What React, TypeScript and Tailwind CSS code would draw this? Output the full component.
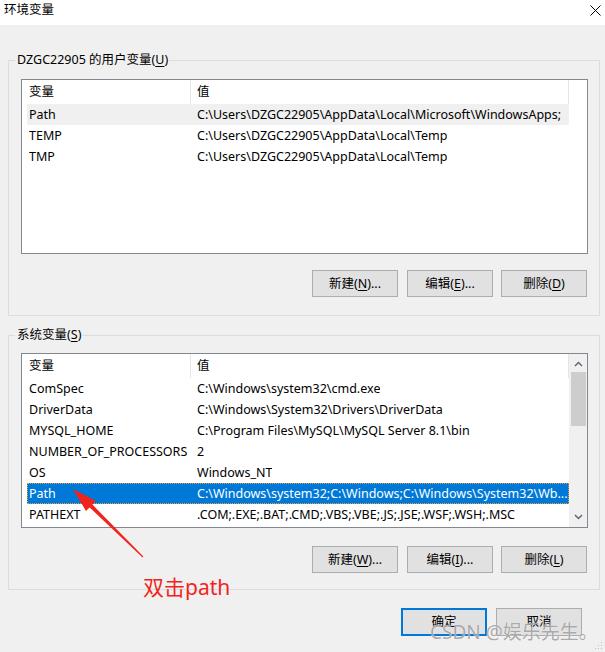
import React from 'react'

const font = { fontFamily: '"Noto Sans", "Noto Sans CJK SC", sans-serif' }

const userVars = [
  { name: 'Path', value: 'C:\\Users\\DZGC22905\\AppData\\Local\\Microsoft\\WindowsApps;', hover: true },
  { name: 'TEMP', value: 'C:\\Users\\DZGC22905\\AppData\\Local\\Temp' },
  { name: 'TMP', value: 'C:\\Users\\DZGC22905\\AppData\\Local\\Temp' },
]

const sysVars = [
  { name: 'ComSpec', value: 'C:\\Windows\\system32\\cmd.exe' },
  { name: 'DriverData', value: 'C:\\Windows\\System32\\Drivers\\DriverData' },
  { name: 'MYSQL_HOME', value: 'C:\\Program Files\\MySQL\\MySQL Server 8.1\\bin' },
  { name: 'NUMBER_OF_PROCESSORS', value: '2' },
  { name: 'OS', value: 'Windows_NT' },
  { name: 'Path', value: 'C:\\Windows\\system32;C:\\Windows;C:\\Windows\\System32\\Wb...', selected: true },
  { name: 'PATHEXT', value: '.COM;.EXE;.BAT;.CMD;.VBS;.VBE;.JS;.JSE;.WSF;.WSH;.MSC' },
]

type Row = { name: string; value: string; hover?: boolean; selected?: boolean }

function WinButton({ label, mnemonic, suffix, className = '' }: { label: string; mnemonic?: string; suffix?: string; className?: string }) {
  return (
    <button className={`h-[27px] w-[86px] border border-[#adadad] bg-[#e1e1e1] text-[12.5px] text-black ${className}`}>
      {label}
      {mnemonic && (
        <>
          (<u className="underline-offset-2">{mnemonic}</u>){suffix}
        </>
      )}
    </button>
  )
}

function VarList({ rows, scroll }: { rows: Row[]; scroll?: boolean }) {
  return (
    <div className="ml-[12px] mt-[11px] flex h-[175px] w-[567px] border border-[#828790] bg-white">
      <div className="flex w-[547px] flex-col">
        <div className="flex h-[24px] items-center">
          <div className="flex h-full w-[169px] items-center border-r border-[#e5e5e5] pl-[7px]">变量</div>
          <div className="flex h-full w-[378px] items-center border-r border-[#e5e5e5] pl-[6px]">值</div>
        </div>
        {rows.map((r) => (
          <div
            key={r.name}
            className={`ml-[5px] flex h-[21px] w-[542px] items-center whitespace-nowrap ${
              r.selected
                ? 'border border-dotted border-[#e9a23b] bg-[#0078d7] pl-[1px] text-white'
                : r.hover
                  ? 'bg-[#f0f0f0] pl-[2px]'
                  : 'pl-[2px]'
            }`}
          >
            <div className="w-[168px] shrink-0 overflow-hidden">{r.name}</div>
            <div className="overflow-hidden">{r.value}</div>
          </div>
        ))}
      </div>
      {scroll ? (
        <div className="flex w-[18px] flex-col items-center bg-[#f0f0f0]">
          <svg width="9" height="6" viewBox="0 0 9 6" className="mt-[7px]">
            <path d="M1 5 L4.5 1.5 L8 5" fill="none" stroke="#606060" strokeWidth="1.4" />
          </svg>
          <div className="mt-[5px] h-[54px] w-[15px] bg-[#cdcdcd]" />
          <div className="flex-1" />
          <svg width="9" height="6" viewBox="0 0 9 6" className="mb-[7px]">
            <path d="M1 1 L4.5 4.5 L8 1" fill="none" stroke="#606060" strokeWidth="1.4" />
          </svg>
        </div>
      ) : null}
    </div>
  )
}

export default function App() {
  return (
    <div className="relative h-[652px] w-[605px] overflow-hidden bg-[#f0f0f0] text-[12.5px] leading-[16px] text-black" style={font}>
      {/* title bar */}
      <div className="flex h-[25px] items-start justify-between bg-white pl-[4px] pt-[2px]">
        <span>环境变量</span>
        <svg width="11" height="11" viewBox="0 0 11 11" className="mr-[4px] mt-[3px]">
          <path d="M0.5 0.5 L10.5 10.5 M10.5 0.5 L0.5 10.5" stroke="#000" strokeWidth="1" />
        </svg>
      </div>

      <fieldset className="ml-[8px] mt-[27px] w-[592px] border border-[#dcdcdc] pb-[18px]">
        <legend className="ml-[6px] px-[2px]">
          DZGC22905 的用户变量(<u className="underline-offset-2">U</u>)
        </legend>
        <VarList rows={userVars} />
        <div className="ml-[303px] mt-[16px] flex">
          <WinButton label="新建" mnemonic="N" suffix="..." />
          <WinButton label="编辑" mnemonic="E" suffix="..." className="ml-[9px]" />
          <WinButton label="删除" mnemonic="D" className="ml-[8px]" />
        </div>
      </fieldset>

      <fieldset className="ml-[8px] mt-[11px] w-[592px] border border-[#dcdcdc] pb-[16px]">
        <legend className="ml-[6px] px-[2px]">
          系统变量(<u className="underline-offset-2">S</u>)
        </legend>
        <div className="-mt-[1px]">
          <VarList rows={sysVars} scroll />
        </div>
        <div className="ml-[303px] mt-[18px] flex">
          <WinButton label="新建" mnemonic="W" suffix="..." />
          <WinButton label="编辑" mnemonic="I" suffix="..." className="ml-[9px]" />
          <WinButton label="删除" mnemonic="L" className="ml-[8px]" />
        </div>
      </fieldset>

      <div className="ml-[401px] mt-[18px] flex">
        <button className="h-[28px] w-[86px] border-2 border-[#0078d7] bg-[#e1e1e1]">确定</button>
        <button className="ml-[9px] h-[28px] w-[86px] border border-[#adadad] bg-[#e1e1e1]">取消</button>
      </div>

      {/* annotation arrow */}
      <svg className="pointer-events-none absolute left-0 top-0" width="605" height="652">
        <polygon
          points="73,489 96,501 92.4,504.6 143.4,556.6 142.6,557.4 89.6,507.4 86,511"
          fill="#f0241c"
        />
      </svg>
      <div className="pointer-events-none absolute left-[143px] top-[574px] text-[21px] leading-[27px] text-[#f0241c]">双击path</div>

      {/* watermark */}
      <div
        className="pointer-events-none absolute left-[430px] top-[620px] whitespace-nowrap text-[19px] leading-[24px] text-[rgba(120,120,120,0.65)]"
        style={{ textShadow: '0 0 1px #fff' }}
      >
        CSDN @娱乐先生。
      </div>

      {/* resize grip */}
      <svg className="absolute bottom-[2px] right-[2px]" width="8" height="8">
        <rect x="6" y="0" width="1" height="1" fill="#bbb" />
        <rect x="3" y="3" width="1" height="1" fill="#bbb" />
        <rect x="6" y="3" width="1" height="1" fill="#bbb" />
        <rect x="0" y="6" width="1" height="1" fill="#bbb" />
        <rect x="3" y="6" width="1" height="1" fill="#bbb" />
        <rect x="6" y="6" width="1" height="1" fill="#bbb" />
      </svg>
    </div>
  )
}
